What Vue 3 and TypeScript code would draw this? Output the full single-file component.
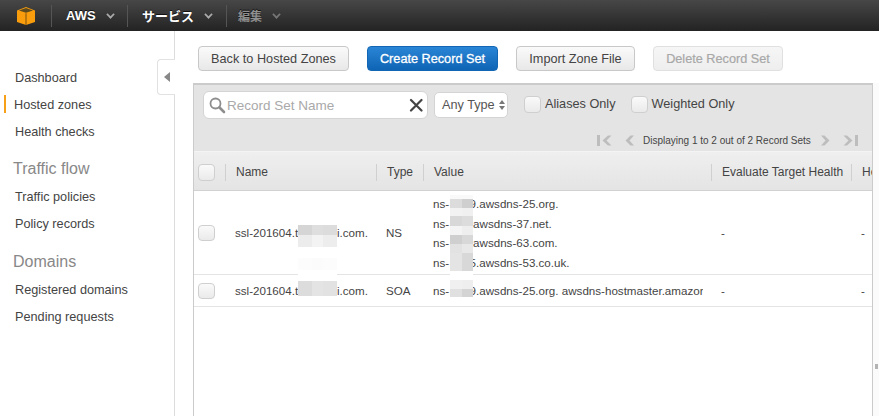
<script setup lang="ts">
interface Val { gap: number; text: string }
interface Row { name: string; tld: string; type: string; values: Val[]; tall: boolean }
interface Tile { x: number; y: number; w: number; h: number; c: string }
const navTop = ['Dashboard', 'Hosted zones', 'Health checks']
const rows: Row[] = [
  {
    name: 'ssl-201604.t', tld: 'i.com.', type: 'NS', tall: true,
    values: [
      { gap: 20.5, text: '9.awsdns-25.org.' },
      { gap: 24, text: 'awsdns-37.net.' },
      { gap: 24, text: 'awsdns-63.com.' },
      { gap: 20.5, text: '5.awsdns-53.co.uk.' },
    ],
  },
  {
    name: 'ssl-201604.t', tld: 'i.com.', type: 'SOA', tall: false,
    values: [{ gap: 20.5, text: '9.awsdns-25.org. awsdns-hostmaster.amazon' }],
  },
]

// Pixelated privacy blur laid over the record names and values, in page pixels.
function band(xs: number[], y: number, h: number, cs: string[]): Tile[] {
  return cs.map((c, i) => ({ x: xs[i], y, w: xs[i + 1] - xs[i], h, c }))
}
const nx = [298, 312, 323, 337]
const vx = [450, 462, 473]
const tiles: Tile[] = [
  ...band([298, 337], 225, 50, ['#ffffff']),
  ...band(nx, 225, 10, ['#d5d5d5', '#dedede', '#dcdcdc']),
  ...band(nx, 235, 12, ['#ececec', '#f3f3f3', '#ededed']),
  ...band(nx, 258, 12, ['#fcfcfc', '#fbfbfb', '#fcfcfc']),
  ...band(nx, 281, 15, ['#dcdcdc', '#e4e4e4', '#e2e2e2']),
  ...band([450, 473], 195, 80, ['#ffffff']),
  ...band(vx, 195, 4, ['#f9f9f9', '#f9f9f9']),
  ...band(vx, 199, 9, ['#dcdcdc', '#cfcfcf']),
  ...band(vx, 208, 8, ['#f2f2f2', '#f0f0f0']),
  ...band(vx, 216, 10, ['#d8d8d8', '#dcdcdc']),
  ...band(vx, 226, 9, ['#f4f4f4', '#eeeeee']),
  ...band(vx, 235, 9, ['#cfcfcf', '#d8d8d8']),
  ...band(vx, 244, 9, ['#e2e2e2', '#e8e8e8']),
  ...band(vx, 253, 18, ['#e4e4e4', '#d8d8d8']),
  ...band(vx, 280, 9, ['#f0f0f0', '#eeeeee']),
  ...band(vx, 289, 8, ['#e0e0e0', '#d4d4d4']),
]
function tileStyle(t: Tile) {
  return { left: t.x - 194 + 'px', top: t.y - 85 + 'px', width: t.w + 'px', height: t.h + 'px', background: t.c }
}
</script>

<template>
  <div class="page">
    <header class="top">
      <div class="logo-cell">
        <svg width="18" height="18" viewBox="0 0 18 18">
          <path d="M0 3.500 9 0l9 3.500V15l-9 3-9-3z" fill="#f99d0c" />
          <path d="M2 3.500 9 1l7 2.500L9 5.800z" fill="#5c4a20" />
          <path d="M8.500 6.200h1V18h-1z" fill="#7a5310" />
        </svg>
      </div>
      <div class="menu aws"><b>AWS</b><span class="chev"></span></div>
      <div class="menu svc"><b>サービス</b><span class="chev"></span></div>
      <div class="menu edit"><b>編集</b><span class="chev"></span></div>
    </header>
    <div class="body">
      <aside class="side">
        <ul class="nav">
          <li v-for="n in navTop" :key="n" :class="{ on: n === 'Hosted zones' }">{{ n }}</li>
        </ul>
        <h3>Traffic flow</h3>
        <ul class="nav">
          <li>Traffic policies</li>
          <li>Policy records</li>
        </ul>
        <h3 class="dom">Domains</h3>
        <ul class="nav">
          <li>Registered domains</li>
          <li>Pending requests</li>
        </ul>
        <div class="collapse"><span></span></div>
      </aside>
      <main class="main">
        <div class="actions">
          <button class="btn b1">Back to Hosted Zones</button>
          <button class="btn primary">Create Record Set</button>
          <button class="btn b3">Import Zone File</button>
          <button class="btn disabled">Delete Record Set</button>
        </div>
        <div class="shell">
          <section class="panel">
            <div class="filters">
              <div class="filter-row">
                <div class="search">
                  <svg width="17" height="17" viewBox="0 0 17 17" fill="none" stroke="#8e8e8e">
                    <circle cx="6.500" cy="6.500" r="5" stroke-width="1.800" />
                    <path d="M10.500 10.500 15 15" stroke-width="2.600" stroke-linecap="round" />
                  </svg>
                  <span class="ph">Record Set Name</span>
                  <svg class="x" width="14" height="14" viewBox="0 0 14 14" stroke="#444" stroke-width="2.200" stroke-linecap="round">
                    <path d="M2 2 12.500 12.500M12.500 2 2 12.500" />
                  </svg>
                </div>
                <div class="select">Any Type<span class="updown"><i></i><i></i></span></div>
                <label class="chk-l"><span class="cb"></span>Aliases Only</label>
                <label class="chk-l weighted"><span class="cb"></span>Weighted Only</label>
              </div>
              <div class="pager">
                <svg width="15" height="13" viewBox="0 0 15 13" fill="#bdbdbd"><path d="M0 1h3v11H0zM11 1.500h3.500L9.500 6.500l5 5H11L5.500 6.500z" /></svg>
                <svg class="p2" width="10" height="13" viewBox="0 0 10 13" fill="#bdbdbd"><path d="M5.500 1.500H9L4.500 6.500l4.500 5H5.500L0.500 6.500z" /></svg>
                <span>Displaying 1 to 2 out of 2 Record Sets</span>
                <svg class="p3" width="10" height="13" viewBox="0 0 10 13" fill="#bdbdbd"><path d="M1 1.500h3.500l5 5-5 5H1l4.500-5z" /></svg>
                <svg class="p4" width="15" height="13" viewBox="0 0 15 13" fill="#bdbdbd"><path d="M0.500 1.500H4l5.500 5-5.500 5H0.500l5-5zM12 1h3v11h-3z" /></svg>
              </div>
            </div>
            <div class="grid head">
              <div class="c"><span class="cb"></span></div>
              <div class="c sep">Name</div>
              <div class="c sep">Type</div>
              <div class="c sep">Value</div>
              <div class="c sep">Evaluate Target Health</div>
              <div class="c sep">Health Check ID</div>
            </div>
            <div v-for="r in rows" :key="r.type" class="grid row" :class="{ tall: r.tall }">
              <div class="c"><span class="cb"></span></div>
              <div class="c"><span class="clip">{{ r.name }}</span><span class="tld">{{ r.tld }}</span></div>
              <div class="c">{{ r.type }}</div>
              <div class="c vals">
                <div v-for="v in r.values" :key="v.text" class="val">ns-<span class="gap" :style="{ width: v.gap + 'px' }"></span>{{ v.text }}</div>
              </div>
              <div class="c">-</div>
              <div class="c">-</div>
            </div>
            <i v-for="(t, i) in tiles" :key="i" class="tile" :style="tileStyle(t)"></i>
          </section>
          <div class="rail"><span></span></div>
        </div>
      </main>
    </div>
  </div>
</template>

<style>
html, body { margin: 0; background: #fff; overflow: hidden; }
</style>

<style scoped>
.page { width: 879px; height: 416px; overflow: hidden; font-family: "Liberation Sans", Arial, sans-serif; font-size: 12.700px; color: #444; display: flex; flex-direction: column; }
.top { height: 31px; flex: none; display: flex; align-items: center; background: linear-gradient(#474747, #232323); }
.logo-cell { width: 52px; height: 22px; box-sizing: border-box; border-right: 1px solid #555; display: flex; align-items: center; padding-left: 17px; }
.menu { height: 22px; display: flex; align-items: center; color: #fff; font-size: 13px; box-sizing: border-box; border-right: 1px solid #555; font-family: "Liberation Sans", "Noto Sans CJK JP", sans-serif; text-shadow: 0 -1px 0 #111; }
.aws { width: 76px; padding-left: 14px; }
.svc { width: 99px; padding-left: 14px; }
.edit { width: 70px; border-right: 0; padding-left: 11px; color: #8f8f8f; font-size: 12px; }
.chev { width: 5px; height: 5px; border-right: 2px solid #aaa; border-bottom: 2px solid #aaa; transform: rotate(45deg) scale(.85); margin: -3px 0 0 11px; }
.edit .chev { border-color: #777; }
.body { flex: 1; display: flex; min-height: 0; }
.side { width: 174px; flex: none; border-right: 1px solid #dcdcdc; position: relative; padding-top: 34px; }
.nav { list-style: none; margin: 0; padding: 0; }
.nav li { height: 27px; line-height: 27px; padding-left: 15px; white-space: nowrap; }
.nav li.on { position: relative; padding-left: 14px; }
.nav li.on::before { content: ""; position: absolute; left: 4px; top: 3px; width: 2px; height: 18px; background: #f7a11a; }
h3 { margin: 10px 0 0; padding-left: 13px; height: 28px; line-height: 25px; font-size: 16px; font-weight: 400; color: #888; }
h3.dom { margin-top: 11px; }
.collapse { position: absolute; right: -1px; top: 28px; width: 18px; height: 36px; box-sizing: border-box; background: #fff; border: 1px solid #e2e2e2; border-right: 0; border-radius: 4px 0 0 4px; display: flex; align-items: center; justify-content: center; }
.collapse span { width: 0; height: 0; border-style: solid; border-width: 5px 6px 5px 0; border-color: transparent #888 transparent transparent; }
.main { flex: 1; min-width: 0; padding-left: 18px; display: flex; flex-direction: column; }
.actions { display: flex; height: 52px; padding: 15px 0 0 5px; box-sizing: border-box; gap: 18px; }
.btn { height: 25px; box-sizing: border-box; border: 1px solid #c8c8c8; border-radius: 4px; background: linear-gradient(#fafafa, #e8e8e8); font: 12.700px "Liberation Sans", Arial, sans-serif; color: #444; padding: 0; }
.b1 { width: 151px; }
.primary { width: 131px; background: linear-gradient(#2a85d6, #0f64b4); border-color: #1266b4; color: #fff; -webkit-text-stroke: 0.3px #fff; }
.b3 { width: 119px; }
.disabled { width: 130px; color: #a8a8a8; -webkit-text-stroke: 0.2px #a8a8a8; border-color: #e0e0e0; background: linear-gradient(#f6f6f6, #eeeeee); }
.shell { flex: 1; display: flex; min-height: 0; }
.panel { position: relative; width: 680px; box-sizing: border-box; border: solid #cbcbcb; border-width: 2px 1px 0; overflow: hidden; background: #fff; }
.rail { flex: 1; background: #fbfbfb; position: relative; }
.rail span { position: absolute; left: 2px; top: 281px; width: 3px; height: 5px; background: #b4b4b4; }
.filters { height: 67px; box-sizing: border-box; background: #e4e4e4; border-bottom: 1px solid #f4f4f4; padding: 6px 0 0 9px; }
.filter-row { display: flex; align-items: flex-start; }
.search { width: 225px; height: 28px; box-sizing: border-box; background: #fff; border: 1px solid #d4d4d4; border-radius: 6px; display: flex; align-items: center; padding-left: 5px; flex: none; }
.ph { color: #a9a9a9; margin-left: 1px; font-size: 13.500px; }
.x { margin-left: auto; margin-right: 4px; }
.select { width: 74px; height: 26px; box-sizing: border-box; margin: 1px 0 0 6px; background: #fff; border: 1px solid #d4d4d4; border-radius: 5px; display: flex; align-items: center; padding-left: 7px; color: #555; white-space: nowrap; flex: none; }
.updown { display: flex; flex-direction: column; gap: 2px; margin-left: 4px; }
.updown i { width: 0; height: 0; border-style: solid; border-width: 0 3px 4px 3px; border-color: transparent transparent #777 transparent; }
.updown i:last-child { border-width: 4px 3px 0 3px; border-color: #777 transparent transparent transparent; }
.cb { display: block; width: 17px; height: 16px; box-sizing: border-box; background: linear-gradient(#fafafa, #eaeaea); border: 1px solid #cfcfcf; border-radius: 4px; }
.head .cb { height: 17px; }
.chk-l { display: flex; align-items: center; gap: 4px; margin-left: 16px; height: 26px; white-space: nowrap; color: #444; flex: none; }
.chk-l .cb { width: 17px; height: 17px; }
.weighted { margin-left: 15px; }
.pager { display: flex; align-items: center; height: 14px; margin-top: 14px; padding-left: 394px; font-size: 10px; white-space: nowrap; }
.pager .p2 { margin: 0 8px 0 13px; }
.pager span { margin-right: 8px; width: 169px; flex: none; }
.pager .p4 { margin-left: 13px; }
.grid { display: grid; grid-template-columns: 31px 151px 47px 288px 140px 1fr; }
.head { height: 38px; background: linear-gradient(#efefef, #e4e4e4); border-bottom: 1px solid #d2d2d2; box-sizing: content-box; white-space: nowrap; overflow: hidden; font-size: 12px; }
.head .c { height: 17px; margin-top: 12px; padding-left: 10px; line-height: 17px; }
.head .c:first-child { padding-left: 4px; }
.head .sep { border-left: 1px solid #d0d0d0; }
.c { box-sizing: border-box; min-width: 0; }
.row { height: 32px; box-sizing: border-box; align-items: center; border-bottom: 1px solid #e4e4e4; white-space: nowrap; font-size: 11.600px; }
.row.tall { height: 84px; }
.row .c { padding-left: 10px; overflow: hidden; }
.row .c:first-child { padding-left: 4px; }
.clip { display: inline-block; width: 63px; overflow: hidden; vertical-align: bottom; }
.tld { margin-left: 39px; }
.tall .vals { padding-top: 1px; }
.val { height: 19.500px; line-height: 19.500px; overflow: hidden; margin-right: 8px; }
.gap { display: inline-block; }
.tile { position: absolute; display: block; }
</style>
